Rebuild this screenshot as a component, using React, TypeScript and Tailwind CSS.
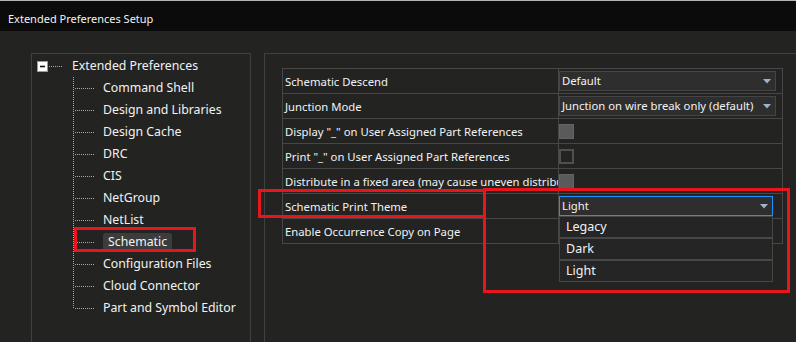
import React from "react";

const treeItems = [
  "Command Shell",
  "Design and Libraries",
  "Design Cache",
  "DRC",
  "CIS",
  "NetGroup",
  "NetList",
  "Schematic",
  "Configuration Files",
  "Cloud Connector",
  "Part and Symbol Editor",
];

type Row = { label: string; kind: "select" | "check" | "box" | "theme" | "none"; value?: string };

const rows: Row[] = [
  { label: "Schematic Descend", kind: "select", value: "Default" },
  { label: "Junction Mode", kind: "select", value: "Junction on wire break only (default)" },
  { label: 'Display "_" on User Assigned Part References', kind: "check" },
  { label: 'Print "_" on User Assigned Part References', kind: "box" },
  { label: "Distribute in a fixed area (may cause uneven distribution)", kind: "check" },
  { label: "Schematic Print Theme", kind: "theme", value: "Light" },
  { label: "Enable Occurrence Copy on Page", kind: "none" },
];

function Arrow() {
  return (
    <svg width="8" height="5" viewBox="0 0 8 5" className="shrink-0">
      <path d="M0 0 H8 L4 4.5 Z" fill="#9fb2cc" />
    </svg>
  );
}

function Connector({ last }: { last: boolean }) {
  return (
    <svg width="21" height="22" className="shrink-0">
      <line x1="0.5" y1="0" x2="0.5" y2={last ? 11 : 22} stroke="#a8a8a8" strokeDasharray="1 1" />
      <line x1="2" y1="11.5" x2="21" y2="11.5" stroke="#a8a8a8" strokeDasharray="1 1" />
    </svg>
  );
}

function Value({ row }: { row: Row }) {
  if (row.kind === "select") {
    return (
      <div className="w-[217px] h-[20px] bg-[#2e2e2e] border border-[#454545] flex items-center justify-between pl-[2px] pr-[4px]">
        <span className="whitespace-nowrap">{row.value}</span>
        <Arrow />
      </div>
    );
  }
  if (row.kind === "check") {
    return <div className="w-[15px] h-[15px] bg-[#5a5a5a] border border-[#636363]" />;
  }
  if (row.kind === "box") {
    return <div className="w-[15px] h-[15px] border-2 border-[#505050]" />;
  }
  if (row.kind === "theme") {
    return (
      <div className="relative">
        <div className="w-[214px] h-[20px] bg-[#2e2e2e] border border-[#1e90ff] flex items-center justify-between pl-[2px] pr-[4px]">
          <span>{row.value}</span>
          <Arrow />
        </div>
        <div className="absolute left-0 top-[20px] w-[214px] z-10 text-[12.5px]">
          {["Legacy", "Dark", "Light"].map((o) => (
            <div key={o} className="h-[22px] bg-[#252525] border border-[#474747] flex items-center pl-[6px]">
              {o}
            </div>
          ))}
        </div>
      </div>
    );
  }
  return null;
}

export default function App() {
  return (
    <div className="relative w-[796px] h-[342px] overflow-hidden bg-[#232422] text-[#f2f2f2] font-['Noto_Sans',sans-serif] flex flex-col">
      <div className="h-[31px] shrink-0 bg-[#0b0b0b] border-t border-[#b4b4b4] flex items-center pl-[8px] pt-[6px] text-[11px]">
        Extended Preferences Setup
      </div>

      <div className="flex flex-1 pt-[22px] pl-[31px]">
        {/* tree */}
        <div className="w-[220px] h-[320px] shrink-0 border border-[#404040] pt-[1px] text-[12.3px]">
          <div className="h-[22px] flex items-center pl-[5px]">
            <svg width="11" height="11" className="shrink-0">
              <rect x="0.5" y="0.5" width="10" height="10" fill="#ffffff" stroke="#9a9a9a" />
              <line x1="3" y1="5.5" x2="8" y2="5.5" stroke="#111" strokeWidth="1.6" />
            </svg>
            <svg width="14" height="22" className="shrink-0">
              <line x1="1" y1="11.5" x2="14" y2="11.5" stroke="#a8a8a8" strokeDasharray="1 1" />
            </svg>
            <span className="ml-[10px] whitespace-nowrap">Extended Preferences</span>
          </div>
          {treeItems.map((t, i) => (
            <div key={t} className="h-[22px] flex items-center pl-[41px]">
              <Connector last={i === treeItems.length - 1} />
              {t === "Schematic" ? (
                <span className="ml-[9px] px-[5px] h-[18px] flex items-center rounded-[3px] bg-[#3c3c3c] whitespace-nowrap">
                  {t}
                </span>
              ) : (
                <span className="ml-[9px] whitespace-nowrap">{t}</span>
              )}
            </div>
          ))}
        </div>

        {/* settings */}
        <div className="ml-[13px] flex-1 border-l border-t border-[#404040] pl-[17px] pt-[14px] text-[11.3px]">
          <div className="w-[501px] border-l border-r border-t border-[#474747]">
            {rows.map((r) => (
              <div key={r.label} className="h-[25px] flex border-b border-[#474747]">
                <div className="w-[276px] shrink-0 border-r border-[#474747] pl-[2px] pt-[2px] flex items-center overflow-hidden whitespace-nowrap">
                  {r.label}
                </div>
                <div className="flex-1 flex items-center">
                  <Value row={r} />
                </div>
              </div>
            ))}
          </div>
        </div>
      </div>

      {/* annotation boxes */}
      <div className="absolute left-[74px] top-[227px] w-[122px] h-[25px] border-[3px] border-[#e8151d] z-20" />
      <div className="absolute left-[258px] top-[189px] w-[228px] h-[29px] border-[3px] border-[#e8151d] z-20" />
      <div className="absolute left-[483px] top-[188px] w-[307px] h-[105px] border-[3px] border-[#e8151d] z-20" />
    </div>
  );
}
